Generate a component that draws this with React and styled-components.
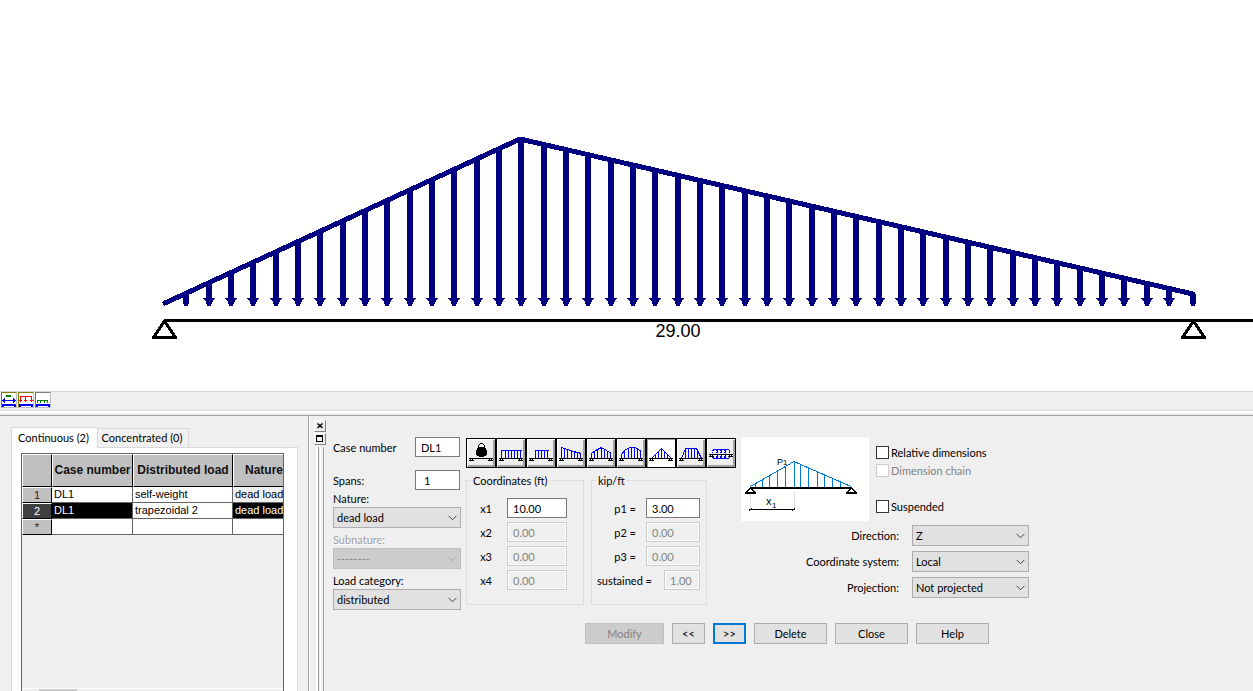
import React, { useState } from "react";
import styled, { createGlobalStyle, css } from "styled-components";

const GlobalStyle = createGlobalStyle`
  * {
    box-sizing: border-box;
  }
  body {
    margin: 0;
    background: #fff;
  }
  body, button, input, select {
    font-family: Lato, "Noto Sans", sans-serif;
    font-size: 11px;
    color: #000;
  }
`;

const Page = styled.div`
  display: flex;
  flex-direction: column;
  height: 100vh;
  overflow: hidden;
`;

const BeamCanvas = styled.svg`
  display: block;
  width: 100%;
  height: auto;
  flex: none;
  shape-rendering: crispEdges;
`;

const StripBar = styled.div`
  display: flex;
  gap: 1px;
  height: 20px;
  padding-left: 1px;
  background: #efefef;
  border-top: 1px solid #d9d9d9;
  border-bottom: 1px solid #dcdcdc;
  flex: none;
`;

const StripButton = styled.button`
  width: 16px;
  height: 16px;
  padding: 0;
  background: #fff;
  border: 1px solid #c0c0c0;
  border-left-color: #808000;
  border-top-color: ${(p) => (p.$on ? "#808000" : "#808080")};

  svg {
    display: block;
    shape-rendering: crispEdges;
  }
`;

const Dock = styled.div`
  display: flex;
  flex: 1;
  min-height: 0;
  margin-top: 4px;
  background: #efefef;
  border-top: 1px solid #a0a0a0;
  box-shadow: 0 -2px 0 #efefef;
`;

const LeftPane = styled.div`
  display: flex;
  flex-direction: column;
  width: 309px;
  padding: 11px 10px 0 11px;
  border-right: 1px solid #a0a0a0;
  flex: none;
`;

const Tabs = styled.div`
  display: flex;
  align-items: flex-end;
`;

const Tab = styled.button`
  height: ${(p) => (p.$active ? 21 : 19)}px;
  width: ${(p) => (p.$active ? 87 : 91)}px;
  margin-bottom: ${(p) => (p.$active ? -1 : 0)}px;
  padding: 0 2px 2px 0;
  white-space: nowrap;
  background: ${(p) => (p.$active ? "#fff" : "#f0f0f0")};
  border: 1px solid #d9d9d9;
  border-left-width: ${(p) => (p.$active ? 1 : 0)}px;
  border-bottom: none;
  z-index: ${(p) => (p.$active ? 1 : 0)};
`;

const TabPage = styled.div`
  display: flex;
  flex: 1;
  min-height: 0;
  padding: 5px 13px 0 9px;
  background: #fff;
  border: 1px solid #d9d9d9;
  border-bottom: none;
`;

const GridFrame = styled.div`
  display: flex;
  flex-direction: column;
  justify-content: space-between;
  flex: 1;
  min-width: 0;
  overflow: hidden;
  background: #efefef;
  border: 1px solid #646464;
  border-bottom: none;
`;

const Grid = styled.table`
  width: 100%;
  table-layout: fixed;
  border-collapse: separate;
  border-spacing: 0;
  font-family: "Liberation Sans", Arial, sans-serif;

  th, td {
    padding: 0;
    white-space: nowrap;
    overflow: hidden;
  }
`;

const raised = css`
  background: #c0c0c0;
  border: 1px solid #fff;
  border-right-color: #000;
  border-bottom-color: #000;
`;

const HeadCell = styled.th`
  ${raised}
  height: 33px;
  font-size: 12px;
  color: #111;
  text-align: ${(p) => (p.$last ? "right" : "center")};
  ${(p) => p.$last && "border-right: none;"}

  && {
    padding-bottom: 2px;
  }
`;

const RowHead = styled.th`
  ${raised}
  height: 16px;
  line-height: 12px;
  font-weight: 400;
  color: ${(p) => (p.$selected ? "#fff" : "#222")};
  ${(p) => p.$selected && "background: #404040;"}
`;

const Cell = styled.td`
  height: 16px;
  line-height: 12px;
  text-align: left;
  background: ${(p) => (p.$selected ? "#000" : p.$shade ? "#efefef" : "#fff")};
  color: ${(p) => (p.$selected ? "#fff" : "#000")};
  border-right: 1px solid #646464;
  border-bottom: 1px solid #646464;

  && {
    padding: 0 0 2px 2px;
  }
  &:last-child {
    border-right: none;
  }
`;

const ScrollTrack = styled.div`
  height: 3px;
  padding-left: 17px;
  border-top: 1px solid #fff;
`;

const ScrollThumb = styled.div`
  width: 38px;
  height: 2px;
  background: #cdcdcd;
`;

const Gripper = styled.div`
  display: flex;
  flex-direction: column;
  align-items: center;
  gap: 1px;
  width: 23px;
  padding: 4px 2px 0 0;
  border-left: 1px solid #fff;
  flex: none;
`;

const TinyButton = styled.button`
  width: 12px;
  height: 12px;
  padding: 0;
  background: #f0f0f0;
  border: 1px solid #fff;
  border-right-color: #808080;
  border-bottom-color: #808080;

  svg {
    display: block;
  }
`;

const GripLines = styled.div`
  flex: 1;
  width: 8px;
  margin-top: 1px;
  border-left: 2px solid #fff;
  border-right: 1px solid #a0a0a0;
  background: linear-gradient(to right, #a0a0a0 1px, #efefef 1px, #efefef 2px, #fff 2px, #fff 3px, #efefef 3px);
`;

const LoadForm = styled.form`
  flex: 1;
  min-width: 0;
  padding: 21px 0 0 1px;
`;

const Columns = styled.div`
  display: flex;
  gap: 5px;
`;

const CaseColumn = styled.div`
  width: 128px;
  flex: none;
`;

const InlineField = styled.div`
  display: flex;
  align-items: center;
  justify-content: space-between;
  padding-right: 1px;
  margin-bottom: ${(p) => p.$space}px;
`;

const TextBox = styled.input`
  width: ${(p) => p.$w}px;
  height: 20px;
  padding: 0 0 0 ${(p) => p.$pad || 5}px;
  background: #fff;
  border: 1px solid #7a7a7a;
  border-radius: 0;

  &:disabled {
    color: #838383;
    background: #efefef;
    border-color: #cccccc;
    box-shadow: inset 0 0 0 1px #fff;
  }
`;

const StackedField = styled.div`
  margin-bottom: 4px;
`;

const FieldLabel = styled.label`
  display: block;
  line-height: 16px;
  color: ${(p) => (p.$dim ? "#a0a0a0" : "#000")};
  ${(p) => p.$dim && "text-shadow: 1px 1px 0 #fff;"}
`;

const SelectWrap = styled.div`
  display: grid;
  align-items: center;

  > * {
    grid-area: 1 / 1;
  }
  > svg {
    justify-self: end;
    margin-right: 4px;
    pointer-events: none;
  }
`;

const SelectBox = styled.select`
  appearance: none;
  width: 100%;
  height: 21px;
  padding: 0 16px 1px 3px;
  background: #e1e1e1;
  border: 1px solid #adadad;
  border-radius: 0;

  &:disabled {
    color: #838383;
    opacity: 1;
    background: #cccccc;
    border-color: #bfbfbf;
  }
`;

const ShapeColumn = styled.div`
  width: 270px;
  padding-top: 1px;
  flex: none;
`;

const ShapeBar = styled.div`
  display: grid;
  grid-template-columns: repeat(9, 1fr);
  margin-bottom: 6px;
`;

const ShapeButton = styled.button`
  height: 30px;
  padding: 0;
  background: ${(p) => (p.$pressed ? "#fff" : "#efefef")};
  border: 1px solid #000;
  box-shadow: ${(p) =>
    p.$pressed
      ? "inset 1px 1px 0 #a0a0a0"
      : "inset 1px 1px 0 #fff, inset -2px -2px 0 #a0a0a0"};

  svg {
    display: block;
    shape-rendering: crispEdges;
  }
`;

const Groups = styled.div`
  display: grid;
  grid-template-columns: 118px 116px;
  gap: 7px;
`;

const Group = styled.fieldset`
  min-width: 0;
  height: 131px;
  margin: 0;
  padding: 11px 6px 0 2px;
  border: 1px solid #dcdcdc;

  legend {
    height: 13px;
    line-height: 13px;
    margin-left: 2px;
    padding: 0 2px;
  }
`;

const ValueRows = styled.div`
  display: grid;
  gap: 4px;
`;

const ValueRow = styled.div`
  display: flex;
  align-items: center;
  justify-content: flex-end;
  gap: ${(p) => p.$gap}px;
  padding-right: ${(p) => p.$end || 0}px;
`;

const ViewColumn = styled.div`
  width: 288px;
  flex: none;
`;

const PreviewRow = styled.div`
  display: flex;
  gap: 7px;
  margin-bottom: 4px;
`;

const Preview = styled.svg`
  display: block;
  background: #fff;
  flex: none;
  shape-rendering: crispEdges;
`;

const Checks = styled.div`
  display: flex;
  flex-direction: column;
  padding-top: 6px;
`;

const CheckLabel = styled.label`
  display: flex;
  align-items: center;
  gap: 2px;
  height: 18px;
  white-space: nowrap;
  margin-top: ${(p) => (p.$apart ? 18 : 0)}px;
  color: ${(p) => (p.$dim ? "#838383" : "#000")};
`;

const CheckBox = styled.input`
  appearance: none;
  width: 13px;
  height: 13px;
  margin: 0;
  background: #fff;
  border: 1px solid #333;

  &:checked {
    background: #333;
    box-shadow: inset 0 0 0 2px #fff;
  }
  &:disabled {
    border-color: #cccccc;
  }
`;

const SystemGrid = styled.div`
  display: grid;
  grid-template-columns: 1fr 117px;
  align-items: center;
  gap: 5px 13px;

  label {
    text-align: right;
  }
`;

const Actions = styled.div`
  display: flex;
  gap: 8px;
  margin: 9px 0 0 252px;
`;

const ActionButton = styled.button`
  width: ${(p) => p.$w}px;
  height: 21px;
  padding: 0 0 1px;
  background: #e1e1e1;
  border: 1px solid #adadad;
  ${(p) => p.$focused && "border: 2px solid #0078d7;"}

  &:disabled {
    color: #838383;
    background: #cccccc;
    border-color: #bfbfbf;
  }
`;

const NAVY = "#000080";
const STEPS = 46;
const STEP = 22.33;
const PEAK_X = 520;
const LEFT = 164;
const RIGHT = 1193;

function BeamView() {
  const arrows = [];
  for (let i = 1; i <= STEPS; i++) {
    const x = i === STEPS ? RIGHT : Math.round(LEFT + i * STEP);
    const top =
      x <= PEAK_X
        ? 303 - ((x - LEFT) / (PEAK_X - LEFT)) * 164
        : 139 + ((x - PEAK_X) / (RIGHT - PEAK_X)) * 155;
    arrows.push({ x, top: Math.round(top), head: i > 1 && i < STEPS });
  }
  return (
    <BeamCanvas viewBox="0 0 1253 391">
      <polyline
        points={`${LEFT + 1},303 ${PEAK_X},139 ${RIGHT},294`}
        fill="none"
        stroke={NAVY}
        strokeWidth="5"
        strokeLinecap="round"
        strokeLinejoin="round"
      />
      {arrows.map((a) => (
        <g key={a.x} fill={NAVY}>
          <rect x={a.x - 3} y={a.top} width="6" height={304 - a.top} />
          <rect x={a.x - 2} y="304" width="4" height="2" />
          {a.head && (
            <path d={`M${a.x - 6} 298h12v1l-2 1v1l-3 3h-2l-3-3v-1l-2-1z`} />
          )}
        </g>
      ))}
      <rect x={LEFT} y="319" width={1253 - LEFT} height="3" />
      {[LEFT, RIGHT].map((x) => (
        <path
          key={x}
          d={`M${x + 0.5} 321L${x - 10.5} 337.5H${x + 11.5}Z`}
          fill="#fff"
          stroke="#000"
          strokeWidth="3"
          strokeLinejoin="round"
        />
      ))}
      <text
        x="678"
        y="337"
        textAnchor="middle"
        fontFamily="Liberation Sans, Arial, sans-serif"
        fontSize="18"
      >
        29.00
      </text>
    </BeamCanvas>
  );
}

// Each outline is drawn over a 28x28 box, bars drop from it to the beam at y=19
const SHAPES = [
  { name: "Self-weight", weight: true },
  { name: "Uniform", line: [[4, 11], [24, 11]], bars: [4, 8, 11, 14, 17, 20, 23] },
  { name: "Uniform 2p", line: [[8, 11], [21, 11]], bars: [8, 11, 14, 17, 20] },
  { name: "Trapezoidal", line: [[4, 8], [10, 10], [16, 12], [24, 14]], bars: [4, 7, 10, 14, 17, 20, 23] },
  { name: "Triangular 3p", line: [[4, 14], [8, 11], [14, 8], [19, 11], [24, 14]], bars: [4, 7, 10, 14, 17, 20, 23] },
  { name: "Trapezoidal 3p", line: [[4, 15], [7, 11], [12, 8], [18, 8], [24, 12]], bars: [4, 7, 11, 14, 17, 20, 23] },
  { name: "Trapezoidal 2", line: [[4, 19], [14, 9], [24, 19]], bars: [8, 11, 14, 17, 20] },
  { name: "Trapezoidal 4p", line: [[4, 19], [8, 9], [19, 9], [24, 19]], bars: [8, 11, 14, 17, 20] },
  { name: "Moment", moment: true },
];

function topAt(line, x) {
  for (let i = 1; i < line.length; i++) {
    const [x0, y0] = line[i - 1];
    const [x1, y1] = line[i];
    if (x <= x1) return Math.round(y0 + ((y1 - y0) * (x - x0)) / (x1 - x0));
  }
  return 19;
}

function ShapeIcon({ shape }) {
  const beamY = shape.moment ? 15 : 19;
  return (
    <svg width="28" height="28" viewBox="0 0 28 28">
      {shape.line && (
        <polyline
          points={shape.line.map(([x, y]) => `${x + 0.5},${y + 0.5}`).join(" ")}
          fill="none"
          stroke="#0000ff"
        />
      )}
      {shape.line &&
        shape.bars.map((x) => {
          const y = topAt(shape.line, x);
          return <rect key={x} x={x} y={y} width="1" height={19 - y} fill="#0000ff" />;
        })}
      {shape.weight && (
        <g>
          <path d="M11 9V6h1V5h1V4h3v1h1v1h1v3h-1V6h-1V5h-3v1h-1v3z" />
          <path d="M12 8h5v1h2v2h1v5h-1v1h-2v1h-5v-1h-2v-1H9v-5h1V9h2z" />
        </g>
      )}
      {shape.moment &&
        [5, 9, 13, 17].map((x) => (
          <g key={x} fill="#0000ff">
            <path d={`M${x} 12v-1h1v-1h4v1h1v3h-1v-3h-3v1z`} />
            <path d={`M${x} 18v1h1v1h4v-1h1v-3h-1v3h-3v-1z`} />
            <path d={`M${x} 13h1v1h-1zM${x} 17h1v1h-1z`} />
          </g>
        ))}
      <rect x="2" y={beamY} width="24" height="1" />
      {[2, 21].map((x) => (
        <path key={x} d={`M${x + 1} ${beamY + 1}h1v1h-1zM${x + 3} ${beamY + 1}h1v1h-1zM${x} ${beamY + 2}h5v1h-5z`} />
      ))}
    </svg>
  );
}

function LoadPreview() {
  const bars = [14, 21, 28, 36, 44, 53, 59, 67, 76, 83, 91, 99];
  return (
    <Preview width="128" height="84" viewBox="0 0 128 84">
      <path d="M9.5 54V71M53.5 54V71" stroke="#e0e0e0" />
      <path d="M9.5 49.5L53 24.5L110 49.5" fill="none" stroke="#0078d7" />
      {bars.map((x) => {
        const y = Math.round(x <= 53 ? 49 - ((x - 9) / 44) * 25 : 24 + ((x - 53) / 57) * 25);
        return <rect key={x} x={x} y={y} width="1" height={50 - y} fill="#0078d7" />;
      })}
      <rect x="9" y="50" width="102" height="2" />
      {[9.5, 110.5].map((x) => (
        <path
          key={x}
          d={`M${x} 51L${x - 4.5} 56H${x + 4.5}Z`}
          fill="#fff"
          stroke="#000"
          strokeWidth="1.5"
        />
      ))}
      <path d="M8 72.5H54M8 74L11 71M51 74L54 71" stroke="#000" />
      <g fontFamily="Liberation Sans, Arial, sans-serif">
        <text x="36" y="28" fontSize="9">P</text>
        <text x="42" y="28" fontSize="8">1</text>
        <text x="25" y="68" fontSize="11">x</text>
        <text x="31" y="71" fontSize="8">1</text>
      </g>
    </Preview>
  );
}

function Select({ id, value, disabled }) {
  return (
    <SelectWrap>
      <SelectBox id={id} disabled={disabled} defaultValue={value}>
        <option>{value}</option>
      </SelectBox>
      <svg width="9" height="6" viewBox="0 0 9 6" fill="none">
        <path d="M0.5 0.8L4.5 4.8L8.5 0.8" stroke={disabled ? "#a5a5a5" : "#444"} />
      </svg>
    </SelectWrap>
  );
}

const ROWS = [
  { no: "1", name: "DL1", load: "self-weight", nature: "dead load" },
  { no: "2", name: "DL1", load: "trapezoidal 2", nature: "dead load" },
  { no: "*", name: "", load: "", nature: "" },
];

function LoadTable() {
  return (
    <GridFrame>
      <Grid>
        <colgroup>
          <col width="30" />
          <col width="81" />
          <col width="100" />
          <col />
        </colgroup>
        <thead>
          <tr>
            <HeadCell />
            <HeadCell>Case number</HeadCell>
            <HeadCell>Distributed load</HeadCell>
            <HeadCell $last>Nature</HeadCell>
          </tr>
        </thead>
        <tbody>
          {ROWS.map((row) => {
            const selected = row.no === "2";
            return (
              <tr key={row.no}>
                <RowHead $selected={selected}>{row.no}</RowHead>
                <Cell $selected={selected}>{row.name}</Cell>
                <Cell>{row.load}</Cell>
                <Cell $selected={selected} $shade={row.no === "1"}>{row.nature}</Cell>
              </tr>
            );
          })}
        </tbody>
      </Grid>
      <ScrollTrack>
        <ScrollThumb />
      </ScrollTrack>
    </GridFrame>
  );
}

function App() {
  const [shape, setShape] = useState(6);
  const [tab, setTab] = useState(0);

  return (
    <Page>
      <GlobalStyle />
      <BeamView />

      {/* Display toggles */}
      <StripBar>
        <StripButton $on aria-label="Dimensions">
          <svg width="14" height="14" viewBox="0 0 14 14">
            <rect x="4" y="2" width="5" height="2" fill="#008000" />
            <path d="M0 7h14v1h-14zM2 5h1v5h-1zM11 5h1v5h-1zM1 6h1v3h-1zM12 6h1v3h-1z" fill="#00f" />
            <path d="M0 11h14v3h-2v-1h-10v1h-2z" fill="#00f" />
          </svg>
        </StripButton>
        <StripButton $on aria-label="Loads">
          <svg width="14" height="14" viewBox="0 0 14 14">
            <path d="M1 3h12v1h-12zM1 3h1v6h-1zM6 3h1v6h-1zM12 3h1v6h-1zM0 7h3v1h-3zM5 7h3v1h-3zM11 7h3v1h-3z" fill="#f00" />
            <path d="M0 11h14v3h-2v-1h-10v1h-2z" fill="#00f" />
          </svg>
        </StripButton>
        <StripButton aria-label="Reactions">
          <svg width="14" height="14" viewBox="0 0 14 14">
            <path d="M1 7h11v1h-11zM1 7h1v3h-1zM4 7h1v3h-1zM8 7h1v3h-1zM11 7h1v3h-1z" fill="#008000" />
            <path d="M0 11h14v3h-2v-1h-10v1h-2z" fill="#00f" />
          </svg>
        </StripButton>
      </StripBar>

      <Dock>
        <LeftPane>
          <Tabs>
            <Tab $active={tab === 0} onClick={() => setTab(0)}>Continuous (2)</Tab>
            <Tab $active={tab === 1} onClick={() => setTab(1)}>Concentrated (0)</Tab>
          </Tabs>
          <TabPage>
            <LoadTable />
          </TabPage>
        </LeftPane>

        <Gripper>
          <TinyButton aria-label="Close panel">
            <svg width="10" height="10" viewBox="0 0 10 10">
              <path d="M2.5 2.5L7.5 7M7.5 2.5L2.5 7" stroke="#000" strokeWidth="1.5" />
            </svg>
          </TinyButton>
          <TinyButton aria-label="Maximize panel">
            <svg width="10" height="10" viewBox="0 0 10 10">
              <path d="M1 1h7v7h-7zM2 3v4h5v-4z" fillRule="evenodd" />
            </svg>
          </TinyButton>
          <GripLines />
        </Gripper>

        <LoadForm onSubmit={(e) => e.preventDefault()}>
          <Columns>
            <CaseColumn>
              <InlineField $space={13}>
                <label htmlFor="case">Case number</label>
                <TextBox id="case" $w={45} defaultValue="DL1" />
              </InlineField>
              <InlineField $space={1}>
                <label htmlFor="spans">Spans:</label>
                <TextBox id="spans" $w={45} $pad={8} defaultValue="1" />
              </InlineField>
              <StackedField>
                <FieldLabel htmlFor="nature">Nature:</FieldLabel>
                <Select id="nature" value="dead load" />
              </StackedField>
              <StackedField>
                <FieldLabel htmlFor="subnature" $dim>Subnature:</FieldLabel>
                <Select id="subnature" value="--------" disabled />
              </StackedField>
              <StackedField>
                <FieldLabel htmlFor="category">Load category:</FieldLabel>
                <Select id="category" value="distributed" />
              </StackedField>
            </CaseColumn>

            <ShapeColumn>
              <ShapeBar>
                {SHAPES.map((s, i) => (
                  <ShapeButton
                    key={s.name}
                    type="button"
                    aria-label={s.name}
                    $pressed={i === shape}
                    onClick={() => setShape(i)}
                  >
                    <ShapeIcon shape={s} />
                  </ShapeButton>
                ))}
              </ShapeBar>
              <Groups>
                <Group>
                  <legend>Coordinates (ft)</legend>
                  <ValueRows>
                    {["x1", "x2", "x3", "x4"].map((name, i) => (
                      <ValueRow key={name} $gap={15} $end={10}>
                        <label htmlFor={name}>{name}</label>
                        <TextBox id={name} $w={60} disabled={i > 0} defaultValue={i ? "0.00" : "10.00"} />
                      </ValueRow>
                    ))}
                  </ValueRows>
                </Group>
                <Group>
                  <legend>kip/ft</legend>
                  <ValueRows>
                    {["p1", "p2", "p3"].map((name, i) => (
                      <ValueRow key={name} $gap={10}>
                        <label htmlFor={name}>{name} =</label>
                        <TextBox id={name} $w={54} disabled={i > 0} defaultValue={i ? "0.00" : "3.00"} />
                      </ValueRow>
                    ))}
                    <ValueRow $gap={12}>
                      <label htmlFor="sustained">sustained =</label>
                      <TextBox id="sustained" $w={36} disabled defaultValue="1.00" />
                    </ValueRow>
                  </ValueRows>
                </Group>
              </Groups>
            </ShapeColumn>

            <ViewColumn>
              <PreviewRow>
                <LoadPreview />
                <Checks>
                  <CheckLabel>
                    <CheckBox type="checkbox" />
                    Relative dimensions
                  </CheckLabel>
                  <CheckLabel $dim>
                    <CheckBox type="checkbox" disabled />
                    Dimension chain
                  </CheckLabel>
                  <CheckLabel $apart>
                    <CheckBox type="checkbox" />
                    Suspended
                  </CheckLabel>
                </Checks>
              </PreviewRow>
              <SystemGrid>
                <label htmlFor="direction">Direction:</label>
                <Select id="direction" value="Z" />
                <label htmlFor="system">Coordinate system:</label>
                <Select id="system" value="Local" />
                <label htmlFor="projection">Projection:</label>
                <Select id="projection" value="Not projected" />
              </SystemGrid>
            </ViewColumn>
          </Columns>

          <Actions>
            <ActionButton type="button" $w={79} disabled>Modify</ActionButton>
            <ActionButton type="button" $w={33}>&lt;&lt;</ActionButton>
            <ActionButton type="button" $w={33} $focused>&gt;&gt;</ActionButton>
            <ActionButton type="button" $w={73}>Delete</ActionButton>
            <ActionButton type="button" $w={73}>Close</ActionButton>
            <ActionButton type="button" $w={73}>Help</ActionButton>
          </Actions>
        </LoadForm>
      </Dock>
    </Page>
  );
}

export default App;
